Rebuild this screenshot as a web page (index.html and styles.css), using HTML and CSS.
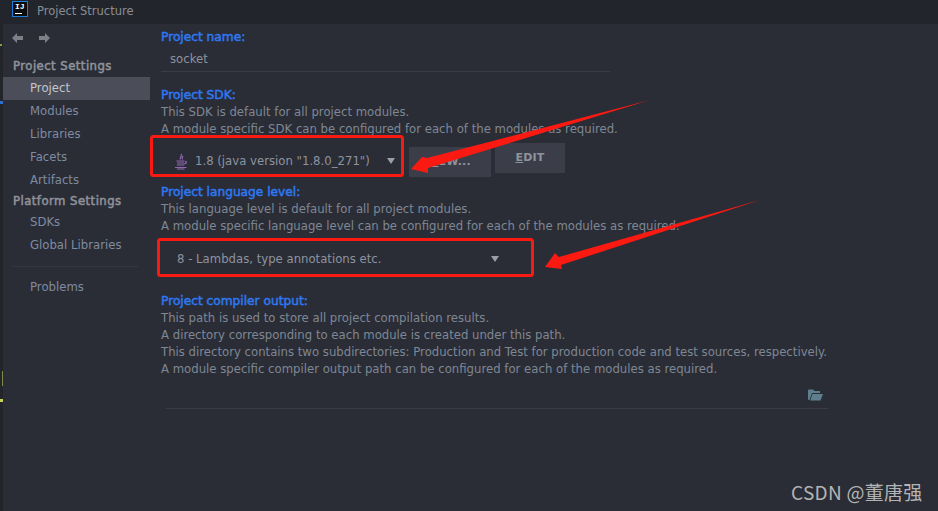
FILE: index.html
```html
<!DOCTYPE html>
<html>
<head>
    <meta charset="utf-8" />
    <title>Project Structure</title>
    <link rel="stylesheet" href="styles.css">
</head>
<body>
<div class="titlebar">
    <div class="logo"><span class="logo-text">IJ</span><span class="logo-bar"></span></div>
    <div class="title">Project Structure</div>
</div>
<div class="window">
    <div class="strip">
        <span class="mark mark-green1"></span>
        <span class="mark mark-blue"></span>
        <span class="mark mark-line"></span>
        <span class="mark mark-green2"></span>
    </div>
    <div class="sidebar">
        <div class="nav-arrows">
            <svg width="12" height="10" viewBox="0 0 12 10"><path d="M0 5 5 0V3H11V7H5V10Z" fill="#7d8087"/></svg>
            <svg width="12" height="10" viewBox="0 0 12 10"><path d="M12 5 7 0V3H1V7H7V10Z" fill="#7d8087"/></svg>
        </div>
        <div class="nav-head">Project Settings</div>
        <ul class="nav-list">
            <li class="active">Project</li>
            <li>Modules</li>
            <li>Libraries</li>
            <li>Facets</li>
            <li>Artifacts</li>
        </ul>
        <div class="nav-head nav-head2">Platform Settings</div>
        <ul class="nav-list nav-list2">
            <li>SDKs</li>
            <li>Global Libraries</li>
        </ul>
        <div class="nav-sep"></div>
        <ul class="nav-list">
            <li>Problems</li>
        </ul>
    </div>
    <div class="main">
        <h4>Project name:</h4>
        <div class="name-field">socket</div>

        <h4 class="sdk-head">Project SDK:</h4>
        <p>This SDK is default for all project modules.</p>
        <p>A module specific SDK can be configured for each of the modules as required.</p>
        <div class="sdk-row">
            <div class="combo sdk-combo">
                <svg class="java" width="14" height="17" viewBox="0 0 14 17" fill="none" stroke="#9268b2" stroke-width="1.2">
                    <path d="M7 1C9 3 5 4 6.500 6.500M9 3C8 4.500 7.500 5 8.500 6.500"/>
                    <path d="M2.500 8H10.500M3 10H10M11 8.500C13 8.500 13 10.500 10 11M3 12H10"/>
                    <path d="M1 14.500H12.500M3 16H10.500"/>
                </svg>
                <span class="combo-text">1.8 (java version "1.8.0_271")</span>
                <span class="caret"></span>
            </div>
            <div class="btn btn-new"><u>N</u>EW...</div>
            <div class="btn btn-edit"><u>E</u>DIT</div>
        </div>

        <h4 class="level-head">Project language level:</h4>
        <p>This language level is default for all project modules.</p>
        <p>A module specific language level can be configured for each of the modules as required.</p>
        <div class="combo level-combo">
            <span class="combo-text">8 - Lambdas, type annotations etc.</span>
            <span class="caret"></span>
        </div>

        <h4 class="output-head">Project compiler output:</h4>
        <p>This path is used to store all project compilation results.</p>
        <p>A directory corresponding to each module is created under this path.</p>
        <p>This directory contains two subdirectories: Production and Test for production code and test sources, respectively.</p>
        <p>A module specific compiler output path can be configured for each of the modules as required.</p>
        <div class="path-field">
            <svg width="15" height="12" viewBox="0 0 15 12"><path d="M0 1.500Q0 .5 1 .5H5L6.500 2H12V4H4L1.500 11H.8Q0 11 0 10Z" fill="#5f7f8f"/><path d="M4.500 5H15L12.500 11.500H2.200Z" fill="#5f7f8f"/></svg>
        </div>
    </div>
</div>

<svg class="marks" width="938" height="511" viewBox="0 0 938 511">
    <rect x="151.500" y="136.500" width="251" height="39" rx="2" fill="none" stroke="#fb1a12" stroke-width="3"/>
    <rect x="158.500" y="239.500" width="374" height="36" rx="2" fill="none" stroke="#fb1a12" stroke-width="3"/>
    <polygon points="650,100 427,158 422,157 411,169 428,173 428,168" fill="#fb1a12"/>
    <polygon points="760,200 559,257 555,253 545,267 562,269 561,265" fill="#fb1a12"/>
</svg>
<div class="watermark">CSDN @董唐强</div>
</body>
</html>
```

FILE: styles.css
```css
* {padding:0; margin:0; box-sizing:border-box}
html, body {height:100%; overflow:hidden}
body {background:#2a2d36; color:#8d939f; font:11.700px "DejaVu Sans", "Noto Sans", sans-serif; display:flex; flex-direction:column}

.titlebar {height:24px; flex:none; background:#22252c; display:flex; align-items:center; padding-left:12px}
.logo {width:16px; height:16px; background:#0d0d0d; border:1px solid #1a7fe0; position:relative; margin-top:-6px; color:#fff; display:flex; flex-direction:column; padding:1px 2px 0}
.logo-text {font:bold 8px/8px "Liberation Mono", monospace}
.logo-bar {width:7px; height:1px; background:#fff; margin-top:2px}
.title {margin-left:9px; color:#8a8d94; margin-top:-3px; font-size:11.500px}

.window {flex:1; display:flex; min-height:0}
.strip {width:3px; flex:none; background:#23252b; position:relative}
.mark {position:absolute; left:0; display:block}
.mark-green1 {top:20px; width:2px; height:2px; background:#8c9a52}
.mark-blue {top:77px; width:3px; height:3px; background:#2f6fd0}
.mark-line {top:347px; left:2px; width:1px; height:15px; background:#7f8a48}
.mark-green2 {top:375px; width:3px; height:3px; background:#c6d25c}

.sidebar {width:147px; flex:none; background:#2a2d36}
.nav-arrows {height:31px; padding:9px 0 0 9px; display:flex; gap:14px; align-items:flex-start}
.nav-head {color:#8f939b; height:22px; line-height:23px; padding-left:10px; letter-spacing:.45px; -webkit-text-stroke:.5px #8f939b}
.nav-head2 {height:19px; line-height:19px; margin-top:0}
.nav-list {list-style:none}
.nav-list li {height:23px; line-height:23px; padding-left:27px; color:#7f8ba0}
.nav-list li.active {background:#4b4e59; color:#c3c6cc}
.nav-sep {height:1px; background:#343741; margin:9px 0 9px 10px; width:125px}

.main {flex:1; padding:5px 0 0 11px; min-width:0}
h4 {font-size:12.200px; font-weight:normal; color:#2f78f0; height:17px; line-height:17px; -webkit-text-stroke:.5px #2f78f0}
p {height:17px; line-height:17px; white-space:nowrap; color:#7f8794}
.name-field {width:449px; height:25px; line-height:24px; border-bottom:1px solid #3a3d47; margin-top:1px; padding-left:9px; color:#8d939f}
.sdk-head {margin-top:15px}

.sdk-row {display:flex; align-items:flex-start; margin-top:4px; height:45px}
.combo {display:flex; align-items:center; color:#8d939f}
.sdk-combo {width:240px; height:30px; margin-top:4px; padding:0 6px 0 13px}
.java {flex:none; margin-right:7px}
.combo-text {flex:1; white-space:nowrap}
.caret {width:0; height:0; border-left:4.500px solid transparent; border-right:4.500px solid transparent; border-top:6px solid #9a9ea6}
.btn {font-weight:bold; font-size:11px; color:#8f939b; background:#3b3e49; text-align:center; letter-spacing:.2px}
.btn-new {width:82px; height:30px; line-height:30px; margin-left:8px; margin-top:5px}
.btn-edit {width:70px; height:30px; line-height:30px; margin-left:4px; margin-top:1px}

.level-head {margin-top:-3px}
.level-combo {width:342px; height:35px; margin:7px 0 0 5px; padding:0 9px 0 11px; border-bottom:2px solid #3a3d47}
.output-head {margin-top:16px}

.path-field {width:662px; height:31px; margin:0 0 0 5px; border-bottom:1px solid #3a3d47; display:flex; justify-content:flex-end; align-items:flex-start; padding:11px 5px 0 0}

.marks {position:absolute; left:0; top:0; pointer-events:none}
.watermark {position:absolute; left:791px; top:479px; font:19px/26px "Noto Sans CJK SC", sans-serif; color:#b4b4b4; letter-spacing:.3px; white-space:nowrap}
```
